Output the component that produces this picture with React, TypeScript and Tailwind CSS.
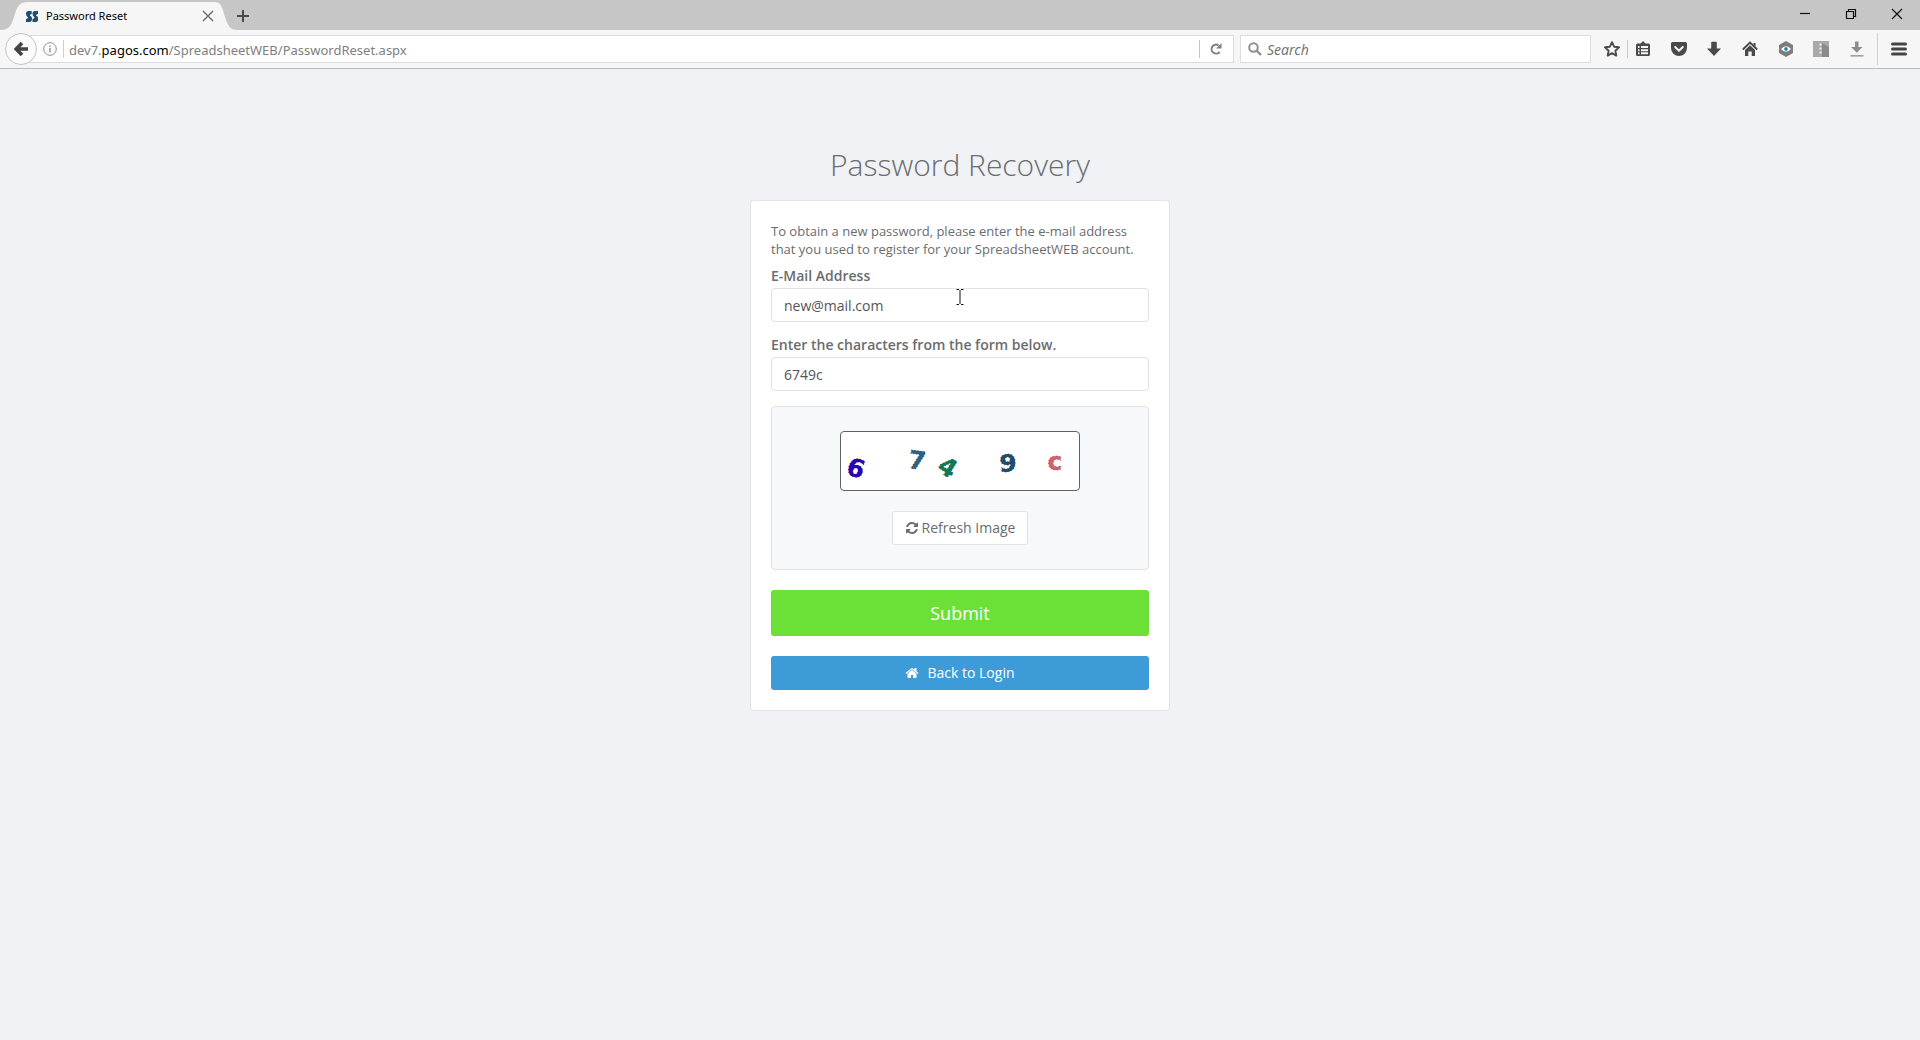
import type { ReactNode } from "react";

const extensions = [
  {
    label: "Bookmarks",
    icon: (
      <svg className="w-4 h-4" viewBox="0 0 16 16" fill="none">
        <path d="M8 0l2.500 2.500H13.500a1.500 1.500 0 0 1 1.500 1.500v9.500A1.500 1.500 0 0 1 13.500 15H2.500a1.500 1.500 0 0 1-1.500-1.500V4A1.500 1.500 0 0 1 2.500 2.500h3z" fill="#4a4a4a" />
        <path d="M3 5h1.500v2H3zM6 5h7v2H6zM3 8.200h1.500v2H3zM6 8.200h7v2H6zM3 11.300h1.500v2H3zM6 11.300h7v2H6z" fill="#f6f6f6" />
      </svg>
    ),
  },
  {
    label: "Save to Pocket",
    icon: (
      <svg className="w-4 h-4" viewBox="0 0 16 16" fill="none">
        <path d="M1.500 1h13A1.500 1.500 0 0 1 16 2.500V7A8 8 0 0 1 0 7V2.500A1.500 1.500 0 0 1 1.500 1z" fill="#4a4a4a" />
        <path d="M4.200 6L8 9.700 11.800 6" stroke="#f6f6f6" strokeWidth="2" strokeLinecap="round" strokeLinejoin="round" />
      </svg>
    ),
  },
  {
    label: "Downloads",
    icon: (
      <svg className="w-4 h-4" viewBox="0 0 16 16" fill="#4a4a4a">
        <path d="M6 .800h4a.8.8 0 0 1 .8.800V7.500H15L8 15 1 7.500h4.200V1.600A.8.8 0 0 1 6 .800z" />
      </svg>
    ),
  },
  {
    label: "Home",
    icon: (
      <svg className="w-4 h-4" viewBox="0 0 16 16" fill="none">
        <path d="M.800 8.500L8 1.500l7.200 7" stroke="#4a4a4a" strokeWidth="1.900" />
        <path d="M11.500 2h2v4l-2-2z" fill="#4a4a4a" />
        <path d="M3 9l5-4.800L13 9v6H9.700v-4.500H6.300V15H3z" fill="#4a4a4a" />
      </svg>
    ),
  },
  {
    label: "Privacy",
    icon: (
      <svg className="w-4 h-4" viewBox="0 0 16 16">
        <path d="M8 0l7 4v8l-7 4-7-4V4z" fill="#7d7d7d" />
        <path d="M3 8Q8 2.500 13 8 8 13.500 3 8z" fill="#fff" />
        <circle cx="8" cy="8" r="1.900" fill="#2f9ac4" />
        <circle cx="8" cy="8" r=".8" fill="#31505c" />
      </svg>
    ),
  },
  {
    label: "Add-on",
    icon: (
      <svg className="w-4 h-4" viewBox="0 0 16 16">
        <path d="M0 0h16v16H0z" fill="#a9a9a9" />
        <path d="M9 2l7 4v10H9z" fill="#8b8b8b" />
        <path d="M6.500 2.500h2v2h-2zM6.500 6.500h2v2h-2zM6.500 10.500h2v2h-2z" fill="#f1f1f1" />
      </svg>
    ),
  },
  {
    label: "Save page",
    icon: (
      <svg className="w-4 h-4" viewBox="0 0 16 16" fill="#85908c">
        <path d="M6 .500h3.500V6h4l-5.700 5.800L2 6h4z" />
        <path d="M1.500 14.200h13v1.300h-13z" />
      </svg>
    ),
  },
];

const captcha = [
  { char: "6", x: 15, y: 45, angle: 18, color: "#2a00b8", edge: "#14005c" },
  { char: "7", x: 76, y: 37, angle: 8, color: "#2f6384", edge: "#14283c" },
  { char: "4", x: 107, y: 44, angle: 32, color: "#0f7a56", edge: "#0a4a44" },
  { char: "9", x: 167, y: 40, angle: 0, color: "#1f4e6c", edge: "#0e2a3c" },
  { char: "c", x: 214, y: 38, angle: 0, color: "#d8606a", edge: "#7a4450" },
];

function WindowButton({ label, children }: { label: string; children: ReactNode }) {
  return (
    <button aria-label={label} className="w-[46px] h-7 flex items-center justify-center">
      <svg className="w-3 h-3" viewBox="0 0 12 12" fill="none" stroke="#111" strokeWidth="1.200">
        {children}
      </svg>
    </button>
  );
}

function TabBar() {
  return (
    <div className="h-[30px] bg-[#c6c6c6] flex items-start justify-between">
      <div className="flex pt-[2px]">
        <svg className="w-7 h-7" viewBox="0 0 28 28" fill="#f6f6f6">
          <path d="M0 28C9 28 11 24 14 15S18 0 28 0V28z" />
        </svg>
        <div className="w-[186px] h-7 bg-[#f6f6f6] flex items-center">
          <svg className="w-3 h-[11px] -ml-0.5 shrink-0" viewBox="0 0 12 11" fill="#1f4e6e">
            <path d="M5.700 0H2.500Q0 0 0 2.700T2 6.200Q2 8 0 8v3h3.200Q6 11 6 8T3.800 4.800Q3.700 3 5.700 3zM12 0H9Q6.500 0 6.500 2.700T8.500 6.200Q8.500 8 6.500 8v3h3Q12.200 11 12.200 8T10 4.800Q10 3 12 3z" />
          </svg>
          <span className="ml-2 grow text-[11px] text-black font-['Noto_Sans',sans-serif]">Password Reset</span>
          <button aria-label="Close tab" className="shrink-0">
            <svg className="w-3 h-3" viewBox="0 0 12 12" stroke="#666" strokeWidth="1.400">
              <path d="M1 1l10 10M11 1L1 11" />
            </svg>
          </button>
        </div>
        <svg className="w-[23px] h-7" viewBox="0 0 23 28" fill="#f6f6f6">
          <path d="M23 28C16 28 14 24 11 15S8 0 0 0V28z" />
        </svg>
        <button aria-label="New tab" className="w-3 h-7 flex items-center justify-center">
          <svg className="w-3 h-3 shrink-0" viewBox="0 0 12 12" stroke="#4a4a4a" strokeWidth="2">
            <path d="M6 0v12M0 6h12" />
          </svg>
        </button>
      </div>
      <div className="flex">
        <WindowButton label="Minimize">
          <path d="M1 5.500h10" />
        </WindowButton>
        <WindowButton label="Restore">
          <path d="M1.500 3.500h7v7h-7zM3.500 3.500v-2h7v7h-2" />
        </WindowButton>
        <WindowButton label="Close">
          <path d="M1 1l10 10M11 1L1 11" />
        </WindowButton>
      </div>
    </div>
  );
}

function Toolbar() {
  return (
    <div className="h-[39px] bg-[#f6f6f6] border-b border-[#b7b9c3] flex items-center font-['Noto_Sans',sans-serif]">
      <button
        aria-label="Back"
        className="relative z-10 ml-[5px] w-8 h-8 shrink-0 rounded-full border border-[#c4c4c4] bg-[#fbfbfb] flex items-center justify-center"
      >
        <svg className="w-4 h-4" viewBox="0 0 16 16" fill="none" stroke="#444" strokeWidth="3.600">
          <path d="M9 2L3.200 8 9 14M3 8h12" />
        </svg>
      </button>
      <div className="-ml-2 pl-[13px] grow h-7 bg-white border border-[#dcdcdc] flex items-center">
        <svg className="w-[14px] h-[14px] shrink-0" viewBox="0 0 14 14" fill="none" stroke="#8f8f8f">
          <circle cx="7" cy="7" r="6.300" />
          <path d="M7 6v4.500M7 3.500v1.500" strokeWidth="1.400" />
        </svg>
        <div
          role="textbox"
          aria-label="Address"
          className="ml-1.5 pl-[5px] pt-px grow h-[18px] text-[13px] leading-[18px] border-l border-[#cfcfcf] text-[#808080]"
        >
          dev7.<span className="text-black">pagos.com</span>/SpreadsheetWEB/PasswordReset.aspx
        </div>
        <button aria-label="Reload" className="pr-[2px] w-[34px] h-[18px] border-l border-[#c4c4c4] flex items-center justify-center">
          <svg className="w-3 h-3" viewBox="0 0 12 12" fill="none">
            <path d="M9.700 8.800A4.500 4.500 0 1 1 8.500 2.300" stroke="#808080" strokeWidth="2" />
            <path d="M11.500 0v5.500H6z" fill="#808080" />
          </svg>
        </button>
      </div>
      <label className="ml-[6px] px-[7px] w-[351px] shrink-0 h-7 bg-white border border-[#dcdcdc] flex items-center">
        <svg className="w-[14px] h-[14px] shrink-0" viewBox="0 0 14 14" fill="none" stroke="#8f8f8f">
          <circle cx="5.500" cy="5.500" r="4.300" strokeWidth="2" />
          <path d="M8.700 8.700L13 13" strokeWidth="2.400" />
        </svg>
        <input
          aria-label="Search"
          placeholder="Search"
          className="ml-[5px] pt-px w-full text-sm italic outline-none placeholder:text-[#757575]"
        />
      </label>
      <button aria-label="Bookmark this page" className="ml-[5px] w-8 h-[18px] shrink-0 border-r border-[#c8c8c8] flex items-center justify-center">
        <svg className="w-4 h-4" viewBox="0 0 16 16" fill="none" stroke="#4a4a4a" strokeWidth="1.900" strokeLinejoin="round">
          <path d="M8 1.200l2.100 4.500 4.900.600-3.600 3.400.900 4.900L8 12.200l-4.300 2.400.900-4.900L1 6.300l4.900-.600z" />
        </svg>
      </button>
      <div className="-ml-[3px] w-[250px] shrink-0 flex">
        {extensions.map((ext) => (
          <button key={ext.label} aria-label={ext.label} className="flex-1 h-8 flex items-center justify-center">
            {ext.icon}
          </button>
        ))}
      </div>
      <button aria-label="Open menu" className="ml-[2px] w-[43px] h-8 shrink-0 border-l border-[#d2d2d2] flex items-center justify-center">
        <svg className="w-4 h-4" viewBox="0 0 16 16" stroke="#444" strokeWidth="3" strokeLinecap="round">
          <path d="M1.500 3h13M1.500 8h13M1.500 13h13" />
        </svg>
      </button>
    </div>
  );
}

function RecoveryForm() {
  return (
    <form className="bg-white border border-[#e2e4e8] rounded-[3px] px-5 pt-[21px] pb-5 flex flex-col" onSubmit={(e) => e.preventDefault()}>
      <p className="text-[13px] leading-[18px]">
        To obtain a new password, please enter the e-mail address that you used to register for your SpreadsheetWEB account.
      </p>
      <label htmlFor="email" className="mt-2 mb-[2px] text-sm leading-5 font-semibold">
        E-Mail Address
      </label>
      <input
        id="email"
        defaultValue="new@mail.com"
        className="h-[34px] px-3 text-sm text-[#555] border border-[#e2e2e4] rounded-[4px] outline-none"
      />
      <label htmlFor="code" className="mt-[13px] mb-[2px] text-sm leading-5 font-semibold">
        Enter the characters from the form below.
      </label>
      <input
        id="code"
        defaultValue="6749c"
        className="h-[34px] px-3 text-sm text-[#555] border border-[#e2e2e4] rounded-[4px] outline-none"
      />

      {/* Captcha */}
      <div className="mt-[15px] h-[164px] flex flex-col items-center pt-6 bg-[#f7f8fa] border border-[#dfe2e6] rounded-[4px]">
        <svg className="w-[240px] h-[60px] bg-white border border-[#5f6166] rounded-[4px]" viewBox="0 0 238 58" role="img" aria-label="Captcha">
          {captcha.map((c) => (
            <text
              key={c.char}
              x={c.x}
              y={c.y}
              transform={`rotate(${c.angle} ${c.x} ${c.y - 9})`}
              textAnchor="middle"
              fill={c.color}
              stroke={c.edge}
              strokeWidth=".8"
              strokeDasharray="1 2"
              fontSize="25"
              className="font-['DejaVu_Sans',sans-serif] font-bold"
            >
              {c.char}
            </text>
          ))}
        </svg>
        <button type="button" className="mt-5 h-[34px] px-3 flex items-center gap-[3px] bg-white border border-[#e2e2e4] rounded-[3px] text-sm">
          <svg className="w-[14px] h-[14px]" viewBox="0 0 1792 1792" fill="currentColor">
            <path d="M1639 1056q0 5-1 7-64 268-268 434.500t-478 166.500q-146 0-282.500-55t-243.500-157l-129 129q-19 19-45 19t-45-19-19-45v-448q0-26 19-45t45-19h448q26 0 45 19t19 45-19 45l-137 137q71 66 161 102t187 36q134 0 250-65t186-179q11-17 53-117 8-23 30-23h192q13 0 22.500 9.500t9.500 22.500zm25-800v448q0 26-19 45t-45 19h-448q-26 0-45-19t-19-45 19-45l138-138q-148-137-349-137-134 0-250 65t-186 179q-11 17-53 117-8 23-30 23h-199q-13 0-22.500-9.500t-9.500-22.500v-7q65-268 270-434.500t480-166.500q146 0 284 55.500t245 156.500l130-129q19-19 45-19t45 19 19 45z" />
          </svg>
          Refresh Image
        </button>
      </div>

      <button type="submit" className="mt-5 h-[46px] bg-[#6be036] rounded-[3px] text-lg text-white">
        Submit
      </button>
      <a href="#login" className="mt-5 h-[34px] flex items-center justify-center gap-2 bg-[#3d9bd8] rounded-[3px] text-sm text-white">
        <svg className="w-[14px] h-[14px]" viewBox="0 0 1792 1792" fill="currentColor">
          <path d="M1472 992v480q0 26-19 45t-45 19h-384v-384h-256v384h-384q-26 0-45-19t-19-45v-480q0-1 .5-3t.5-3l575-474 575 474q1 2 1 6zm223-69l-62 74q-8 9-21 11h-3q-13 0-21-7l-692-577-692 577q-12 8-24 7-13-2-21-11l-62-74q-8-10-7-23.500t11-21.500l719-599q32-26 76-26t76 26l244 204v-195q0-14 9-23t23-9h192q14 0 23 9t9 23v408l219 182q10 8 11 21.500t-7 23.500z" />
        </svg>
        Back to Login
      </a>
    </form>
  );
}

export default function App() {
  return (
    <div className="min-h-screen bg-[#f0f2f6] flex flex-col">
      <TabBar />
      <Toolbar />
      <main className="relative w-[420px] max-w-full mx-auto pt-[76px] font-['Open_Sans',sans-serif] text-[#6a6c6f]">
        <h1 className="mb-[15px] text-center text-[30px] leading-10 font-light">Password Recovery</h1>
        <RecoveryForm />

        {/* Text cursor */}
        <svg className="absolute left-1/2 top-[220px] w-2 h-4 -translate-x-1/2" viewBox="0 0 8 16" fill="none" stroke="#111">
          <path d="M0.500 .500H3M5 .500h2.500M.500 15.500H3M5 15.500h2.500M4 1v14" />
        </svg>
      </main>
    </div>
  );
}
